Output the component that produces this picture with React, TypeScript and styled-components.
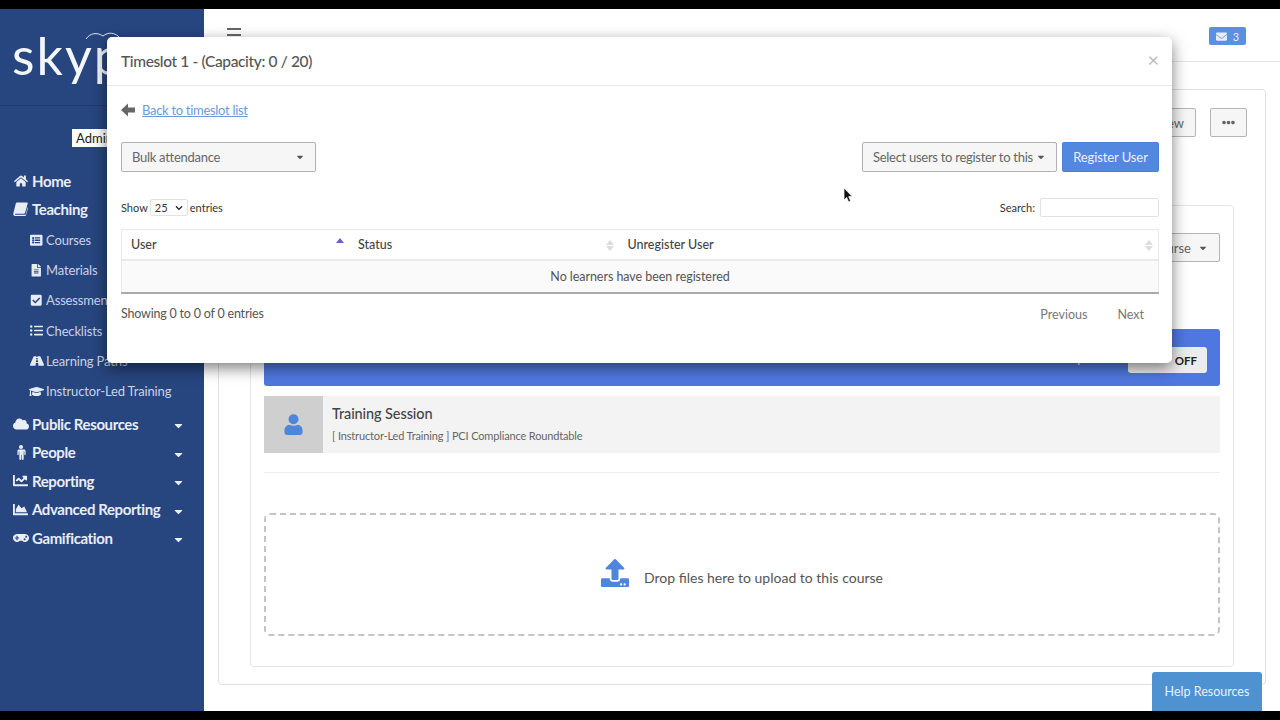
import React from 'react';
import styled, { createGlobalStyle } from 'styled-components';
import {
  FaCaretDown, FaChartArea, FaChartLine, FaCheckSquare, FaChevronDown, FaCloud, FaEllipsisH,
  FaEnvelope, FaFileAlt, FaGamepad, FaGraduationCap, FaHome, FaListAlt, FaListUl, FaRoad,
  FaUpload,
} from 'react-icons/fa';

const GlobalStyle = createGlobalStyle`
  html, body { margin: 0; padding: 0; background: #000; }
  body { font-family: Lato, "Open Sans", Arial, sans-serif; color: #555; }
  * { box-sizing: border-box; }
`;

const Screen = styled.div`
  position: relative;
  width: 1280px;
  height: 720px;
  padding: 9px 0;
  background: #000;
  overflow: hidden;
`;

const Page = styled.div`
  display: flex;
  height: 702px;
  background: #fff;
  overflow: hidden;
`;

/* sidebar */
const Sidebar = styled.aside`
  flex: 0 0 204px;
  min-width: 0;
  overflow: hidden;
  background: #27457f;
  color: #fff;
`;

const LogoBlock = styled.div`
  position: relative;
  height: 97px;
  padding: 14px 0 0 12px;
  border-bottom: 1px solid #1f3a6e;
`;

const LogoText = styled.div`
  font-size: 52px;
  font-weight: 400;
  line-height: 64px;
  letter-spacing: 2px;
  color: #f4f6fa;
`;

const LogoSwoosh = styled.svg`
  position: absolute;
  left: 85px;
  top: 22px;
`;

const RoleRow = styled.div`
  display: flex;
  padding: 23px 0 0 72px;
  height: 60px;
`;

const RoleBox = styled.div`
  height: 18px;
  padding: 0 4px;
  background: #fff;
  color: #222;
  font-size: 13px;
  line-height: 18px;
`;

const Nav = styled.nav`
  display: flex;
  flex-direction: column;
`;

const TopItem = styled.div<{ $h: number }>`
  display: flex;
  align-items: center;
  height: ${p => p.$h}px;
  padding-left: 13px;
  font-size: 15px;
  font-weight: 700;
  letter-spacing: -0.4px;
  color: #e9edf5;
`;

const TopIcon = styled.span`
  display: flex;
  justify-content: center;
  flex: 0 0 15px;
  min-width: 0;
  margin-right: 4px;
  font-size: 14px;
  svg { flex-shrink: 0; }
`;

const Caret = styled.span`
  display: flex;
  margin-left: auto;
  margin-right: 19px;
  padding-top: 4px;
  font-size: 13px;
`;

const SubList = styled.div`
  display: flex;
  flex-direction: column;
  padding: 2px 0 3px;
`;

const SubItem = styled.div`
  display: flex;
  align-items: center;
  height: 30.2px;
  padding-left: 30px;
  font-size: 13px;
  letter-spacing: -0.15px;
  color: #c9d3e6;
  white-space: nowrap;
`;

const SubIcon = styled.span`
  display: flex;
  justify-content: center;
  flex: 0 0 13px;
  min-width: 0;
  margin-right: 3px;
  font-size: 12.5px;
  color: #e6ebf4;
  svg { flex-shrink: 0; }
`;

/* main column behind the dialog */
const Main = styled.main`
  flex: 1;
  display: flex;
  flex-direction: column;
  min-width: 0;
`;

const TopBar = styled.header`
  display: flex;
  justify-content: space-between;
  flex: 0 0 53px;
  padding: 18px 34px 0 23px;
  border-bottom: 1px solid #e4e4e4;
`;

const Burger = styled.div`
  width: 14px;
  height: 8px;
  border-top: 2.5px solid #666;
  border-bottom: 2.5px solid #666;
  margin-top: 1px;
`;

const MailBadge = styled.div`
  display: flex;
  align-items: center;
  justify-content: center;
  gap: 6px;
  width: 37px;
  height: 18px;
  border-radius: 2px;
  background: #5b8fe0;
  color: #e6eefb;
  font-size: 11px;
`;

const Content = styled.div`
  padding: 27px 14px 0;
`;

const OuterCard = styled.section`
  height: 596px;
  padding: 18px 18px 0 31px;
  border: 1px solid #e2e2e2;
  border-radius: 4px;
`;

const ActionRow = styled.div`
  display: flex;
  justify-content: flex-end;
  gap: 14px;
  height: 29px;
  margin-bottom: 68px;
`;

const GhostButton = styled.button<{ $w: number }>`
  display: flex;
  align-items: center;
  justify-content: flex-end;
  gap: 7px;
  width: ${p => p.$w}px;
  height: 29px;
  padding: 0 11px;
  border: 1px solid #b5b5b5;
  border-radius: 2px;
  background: #f6f6f6;
  color: #666;
  font: 400 13px Lato, sans-serif;
  white-space: nowrap;
`;

const InnerCard = styled.div`
  height: 462px;
  margin-right: 13px;
  padding: 27px 13px 0 13px;
  border: 1px solid #e6e6e6;
  border-radius: 4px;
`;

const CourseActions = styled.div`
  display: flex;
  justify-content: flex-end;
  height: 29px;
  margin-bottom: 67px;
`;

const Banner = styled.div`
  display: flex;
  align-items: center;
  justify-content: flex-end;
  gap: 8px;
  height: 57px;
  padding: 5px 13px 0 0;
  margin-bottom: 10px;
  border-radius: 3px;
  background: #4f78df;
  color: #fff;
  font-size: 14px;
`;

const BannerLabel = styled.span`
  margin-bottom: 6px;
`;

const Toggle = styled.div`
  display: flex;
  align-items: center;
  justify-content: flex-end;
  width: 79px;
  height: 26px;
  padding-right: 10px;
  border-radius: 3px;
  background: #ececec;
  color: #222;
  font-size: 11.5px;
  font-weight: 700;
`;

const SessionRow = styled.div`
  display: flex;
  height: 57px;
  margin-bottom: 19px;
  background: #f3f3f3;
`;

const SessionThumb = styled.div`
  display: flex;
  align-items: center;
  justify-content: center;
  flex: 0 0 59px;
  background: #cfcfcf;
  color: #4f86dc;
`;

const SessionText = styled.div`
  padding: 8px 0 0 9px;
`;

const SessionTitle = styled.div`
  font-size: 14.5px;
  font-weight: 500;
  line-height: 20px;
  letter-spacing: -0.1px;
  color: #444;
`;

const SessionSub = styled.div`
  margin-top: 3px;
  font-size: 11px;
  line-height: 18px;
  letter-spacing: -0.15px;
  color: #666;
`;

const Divider = styled.div`
  height: 1px;
  margin-bottom: 40px;
  background: #eee;
`;

const DropZone = styled.div`
  display: flex;
  align-items: center;
  justify-content: center;
  gap: 15px;
  height: 123px;
  padding: 6px 0 0;
  border: 2px dashed #c4c4c4;
  border-radius: 6px;
  font-size: 14px;
  color: #555;
`;

const DropIcon = styled.span`
  display: flex;
  margin-top: -9px;
  color: #4f86dc;
  font-size: 28px;
`;

/* dialog */
const Dialog = styled.div`
  position: absolute;
  left: 107px;
  top: 37px;
  width: 1065px;
  height: 326px;
  background: #fff;
  border-radius: 5px;
  box-shadow: 0 5px 15px rgba(0, 0, 0, 0.5);
`;

const DialogHead = styled.div`
  display: flex;
  align-items: center;
  justify-content: space-between;
  height: 49px;
  padding: 0 13px 1px 14px;
  border-bottom: 1px solid #e8e8e8;
`;

const DialogTitle = styled.h4`
  margin: 0;
  font-size: 15.5px;
  font-weight: 500;
  letter-spacing: -0.36px;
  color: #555;
`;

const CloseMark = styled.span`
  font-size: 20px;
  line-height: 20px;
  color: #bbb;
  margin-top: -4px;
`;

const DialogBody = styled.div`
  padding: 14px 13px 0 14px;
`;

const BackRow = styled.div`
  display: flex;
  align-items: center;
  gap: 7px;
  height: 20px;
  margin-bottom: 22px;
  color: #666;
`;

const BackLink = styled.a`
  font-size: 13px;
  letter-spacing: -0.3px;
  color: #6b9ad9;
  text-decoration: underline;
`;

const ControlRow = styled.div`
  display: flex;
  align-items: center;
  gap: 5px;
  height: 30px;
  margin-bottom: 26px;
`;

const SelectButton = styled.button<{ $w: number; $push?: boolean }>`
  display: flex;
  align-items: center;
  justify-content: space-between;
  width: ${p => p.$w}px;
  height: 30px;
  padding: 0 10px 0 10px;
  margin-right: ${p => (p.$push ? 'auto' : '0')};
  border: 1px solid #b0b0b0;
  border-radius: 2px;
  background: #f6f6f6;
  color: #666;
  font: 400 13px Lato, sans-serif;
  letter-spacing: -0.28px;
  white-space: nowrap;
`;

const PrimaryButton = styled.button`
  width: 97px;
  height: 30px;
  border: 1px solid #4a7fd3;
  border-radius: 2px;
  background: #5288e0;
  color: #eaf1fc;
  font: 400 13px Lato, sans-serif;
  letter-spacing: -0.1px;
`;

const SmallCaret = styled.span`
  display: flex;
  font-size: 10px;
  color: #555;
`;

const FilterRow = styled.div`
  display: flex;
  align-items: center;
  justify-content: space-between;
  height: 19px;
  margin-bottom: 12px;
  font-size: 11px;
  color: #333;
`;

const LengthLabel = styled.label`
  display: flex;
  align-items: center;
  gap: 2px;
`;

const LengthSelect = styled.div`
  display: flex;
  align-items: center;
  justify-content: space-between;
  width: 38px;
  height: 17px;
  padding: 0 4px;
  border: 1px solid #e2e2e2;
  border-radius: 2px;
  font-size: 11px;
  color: #333;
`;

const LengthChevron = styled.span`
  display: flex;
  font-size: 8px;
  color: #222;
`;

const SearchLabel = styled.label`
  display: flex;
  align-items: center;
  gap: 5px;
`;

const SearchInput = styled.input`
  width: 119px;
  height: 19px;
  border: 1px solid #e2e2e2;
  border-radius: 2px;
  background: #fff;
`;

const Table = styled.table`
  width: 100%;
  table-layout: fixed;
  border-collapse: collapse;
  border-top: 1px solid #eaeaea;
  border-left: 1px solid #eaeaea;
  border-right: 1px solid #eaeaea;
`;

const HeadCell = styled.th<{ $w?: number }>`
  position: relative;
  width: ${p => (p.$w ? `${p.$w}px` : 'auto')};
  height: 30px;
  padding: 0 9px;
  border-bottom: 2px solid #eaeaea;
  font-size: 12.5px;
  font-weight: 500;
  text-align: left;
  color: #444;
`;

const SortMark = styled.span<{ $active?: boolean }>`
  position: absolute;
  right: 5px;
  top: ${p => (p.$active ? '8px' : '10px')};
  display: flex;
  flex-direction: column;
  gap: 1px;
  &::before {
    content: '';
    border-left: 4px solid transparent;
    border-right: 4px solid transparent;
    border-bottom: 5px solid ${p => (p.$active ? '#6a62c4' : '#dcdcdc')};
  }
  &::after {
    content: '';
    display: ${p => (p.$active ? 'none' : 'block')};
    border-left: 4px solid transparent;
    border-right: 4px solid transparent;
    border-top: 5px solid #dcdcdc;
  }
`;

const EmptyCell = styled.td`
  height: 33px;
  border-bottom: 2px solid #aaa;
  background: #fafafa;
  font-size: 12.5px;
  letter-spacing: -0.05px;
  text-align: center;
  color: #555;
`;

const TableFooter = styled.div`
  display: flex;
  align-items: center;
  justify-content: space-between;
  padding: 12px 0 0;
  font-size: 12.5px;
  color: #555;
`;

const FooterInfo = styled.span`
  letter-spacing: -0.2px;
`;

const Pager = styled.div`
  display: flex;
  gap: 30px;
  padding: 1px 15px 0 0;
  color: #777;
`;

const Pointer = styled.svg`
  position: absolute;
  left: 843px;
  top: 187px;
`;

const HelpTab = styled.button`
  position: absolute;
  left: 1152px;
  top: 672px;
  width: 110px;
  height: 39px;
  border: 0;
  border-radius: 3px 3px 0 0;
  background: #4f92d2;
  color: #e8f1fa;
  font: 400 12.5px Lato, sans-serif;
`;

const BookIcon = () => (
  <svg width="15" height="14" viewBox="0 0 15 14" fill="currentColor">
    <path d="M4 .5h10c.6 0 .9.5.7 1l-2.6 9.3c-.2.7-.7 1-1.3 1H2.6c-.8 0-.9.9-.1.9h10.1l2-7.4.4.7-2.1 7.5c-.1.3-.3.5-.6.5H2.2C1 14 0 12.9.3 11.6L2.8 1.5C3 .9 3.4.5 4 .5Z" />
  </svg>
);

const PersonIcon = () => (
  <svg width="10" height="15" viewBox="0 0 10 15" fill="currentColor">
    <circle cx="5" cy="2" r="2" />
    <path d="M2 4.6h6c.9 0 1.6.7 1.6 1.6v3.2c0 .9-1.3.9-1.3 0V6.6h-.6V14c0 1.2-1.9 1.2-1.9 0V9.8h-.6V14c0 1.2-1.9 1.2-1.9 0V6.6h-.6v2.8c0 .9-1.3.9-1.3 0V6.2c0-.9.7-1.6 1.6-1.6Z" />
  </svg>
);

const LearnerIcon = () => (
  <svg width="19" height="21" viewBox="0 0 19 21" fill="currentColor">
    <circle cx="9.5" cy="5.2" r="5" />
    <path d="M5 10.8c2.7 1.4 6.3 1.4 9 0 2.9.6 4.6 2.9 4.6 5.9v1.6c0 1.6-1.2 2.7-2.7 2.7H3.1C1.6 21 .4 19.9.4 18.3v-1.6c0-3 1.7-5.3 4.6-5.9Z" />
  </svg>
);

const mainMenu = [
  { icon: <FaCloud size={16} />, label: 'Public Resources', h: 29 },
  { icon: <PersonIcon />, label: 'People', h: 28.5 },
  { icon: <FaChartLine size={15} />, label: 'Reporting', h: 28.5 },
  { icon: <FaChartArea size={15} />, label: 'Advanced Reporting', h: 28.5 },
  { icon: <FaGamepad size={16} />, label: 'Gamification', h: 28.5 },
];

const teachingMenu = [
  { icon: <FaListAlt />, label: 'Courses' },
  { icon: <FaFileAlt />, label: 'Materials' },
  { icon: <FaCheckSquare />, label: 'Assessments' },
  { icon: <FaListUl size={13} />, label: 'Checklists' },
  { icon: <FaRoad size={14} />, label: 'Learning Paths' },
  { icon: <FaGraduationCap size={15} />, label: 'Instructor-Led Training' },
];

export default function App() {
  return (
    <Screen>
      <GlobalStyle />
      <Page>
        <Sidebar>
          <LogoBlock>
            <LogoText>skyprep</LogoText>
            <LogoSwoosh width="36" height="10" viewBox="0 0 36 10" fill="none">
              <path d="M1 8C5 2 12 1 18 5C23 1 30 1 35 7" stroke="#dfe6f2" strokeWidth="1" />
            </LogoSwoosh>
          </LogoBlock>
          <RoleRow>
            <RoleBox>Admin View</RoleBox>
          </RoleRow>
          <Nav>
            <TopItem $h={29}><TopIcon><FaHome /></TopIcon>Home</TopItem>
            <TopItem $h={28}><TopIcon><BookIcon /></TopIcon>Teaching</TopItem>
            <SubList>
              {teachingMenu.map(item => (
                <SubItem key={item.label}><SubIcon>{item.icon}</SubIcon>{item.label}</SubItem>
              ))}
            </SubList>
            {mainMenu.map(item => (
              <TopItem key={item.label} $h={item.h}>
                <TopIcon>{item.icon}</TopIcon>
                {item.label}
                <Caret><FaCaretDown /></Caret>
              </TopItem>
            ))}
          </Nav>
        </Sidebar>
        <Main>
          <TopBar>
            <Burger />
            <MailBadge><FaEnvelope />3</MailBadge>
          </TopBar>
          <Content>
            <OuterCard>
              <ActionRow>
                <GhostButton $w={90}>Preview</GhostButton>
                <GhostButton $w={37}><FaEllipsisH /></GhostButton>
              </ActionRow>
              <InnerCard>
                <CourseActions>
                  <GhostButton $w={130}>Add to course<SmallCaret><FaCaretDown /></SmallCaret></GhostButton>
                </CourseActions>
                <Banner>
                  <BannerLabel>Course Completion</BannerLabel>
                  <Toggle>OFF</Toggle>
                </Banner>
                <SessionRow>
                  <SessionThumb><LearnerIcon /></SessionThumb>
                  <SessionText>
                    <SessionTitle>Training Session</SessionTitle>
                    <SessionSub>[ Instructor-Led Training ] PCI Compliance Roundtable</SessionSub>
                  </SessionText>
                </SessionRow>
                <Divider />
                <DropZone>
                  <DropIcon><FaUpload /></DropIcon>
                  Drop files here to upload to this course
                </DropZone>
              </InnerCard>
            </OuterCard>
          </Content>
        </Main>
      </Page>

      <Dialog>
        <DialogHead>
          <DialogTitle>Timeslot 1 - (Capacity: 0 / 20)</DialogTitle>
          <CloseMark>×</CloseMark>
        </DialogHead>
        <DialogBody>
          <BackRow>
            <svg width="14" height="14" viewBox="0 0 14 14" fill="currentColor">
              <path d="M7 .5 0 7l7 6.5V9.6h7V4.4H7Z" />
            </svg>
            <BackLink href="#">Back to timeslot list</BackLink>
          </BackRow>
          <ControlRow>
            <SelectButton $w={195} $push>Bulk attendance<SmallCaret><FaCaretDown /></SmallCaret></SelectButton>
            <SelectButton $w={195}>Select users to register to this<SmallCaret><FaCaretDown /></SmallCaret></SelectButton>
            <PrimaryButton>Register User</PrimaryButton>
          </ControlRow>
          <FilterRow>
            <LengthLabel>
              Show
              <LengthSelect>25<LengthChevron><FaChevronDown /></LengthChevron></LengthSelect>
              entries
            </LengthLabel>
            <SearchLabel>
              Search:
              <SearchInput />
            </SearchLabel>
          </FilterRow>
          <Table>
            <thead>
              <tr>
                <HeadCell $w={227.5}>User<SortMark $active /></HeadCell>
                <HeadCell $w={269.5}>Status<SortMark /></HeadCell>
                <HeadCell>Unregister User<SortMark /></HeadCell>
              </tr>
            </thead>
            <tbody>
              <tr>
                <EmptyCell colSpan={3}>No learners have been registered</EmptyCell>
              </tr>
            </tbody>
          </Table>
          <TableFooter>
            <FooterInfo>Showing 0 to 0 of 0 entries</FooterInfo>
            <Pager>
              <span>Previous</span>
              <span>Next</span>
            </Pager>
          </TableFooter>
        </DialogBody>
      </Dialog>

      <Pointer width="10" height="16" viewBox="0 0 10 16">
        <path d="M1 1V13L3.7 10.4L5.6 15L7.6 14.1L5.7 9.6H9.2Z" fill="#111" stroke="#fff" strokeWidth="0.7" />
      </Pointer>
      <HelpTab>Help Resources</HelpTab>
    </Screen>
  );
}
